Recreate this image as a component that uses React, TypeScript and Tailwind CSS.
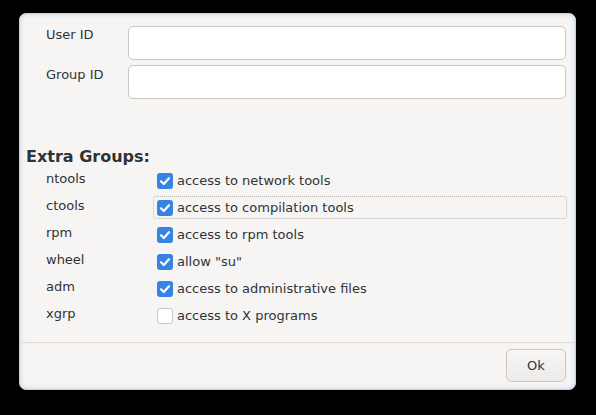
import React from "react";

const groups = [
  { name: "ntools", desc: "access to network tools", checked: true },
  { name: "ctools", desc: "access to compilation tools", checked: true, focus: true },
  { name: "rpm", desc: "access to rpm tools", checked: true },
  { name: "wheel", desc: 'allow "su"', checked: true },
  { name: "adm", desc: "access to administrative files", checked: true },
  { name: "xgrp", desc: "access to X programs", checked: false },
];

function Check({ checked }: { checked: boolean }) {
  if (!checked) {
    return <div className="w-[16px] h-[16px] rounded-[3px] border border-[#cdc7c2] bg-white shrink-0" />;
  }
  return (
    <div className="w-[16px] h-[16px] rounded-[3px] bg-[#3584e4] shrink-0 flex items-center justify-center">
      <svg width="16" height="16" viewBox="0 0 16 16">
        <path d="M4 8.3 L6.8 11 L12 5.2" fill="none" stroke="white" strokeWidth="2.2" strokeLinecap="round" strokeLinejoin="round" />
      </svg>
    </div>
  );
}

export default function App() {
  return (
    <div
      className="w-[596px] h-[415px] bg-black pt-[13px] pl-[19px] text-[13px] leading-[15px] text-[#2e3436]"
      style={{ fontFamily: '"DejaVu Sans", Verdana, sans-serif' }}
    >
      <div className="w-[557px] h-[377px] bg-[#f6f5f4] rounded-[7px] border border-[#c8d0da] shadow-[inset_0_0_5px_rgba(195,212,235,1)] flex flex-col">
        <div className="pt-[12px] flex flex-col gap-[5px]">
          <div className="flex items-start h-[34px]">
            <div className="pl-[26px] w-[108px] pt-[1px]">User ID</div>
            <div className="w-[438px] h-[34px] bg-white border border-[#cdc7c2] rounded-[5px]" />
          </div>
          <div className="flex items-start h-[34px]">
            <div className="pl-[26px] w-[108px] pt-[2px]">Group ID</div>
            <div className="w-[438px] h-[34px] bg-white border border-[#cdc7c2] rounded-[5px]" />
          </div>
        </div>
        <div className="mt-[48px] ml-[6px] text-[16px] leading-[19px] font-bold">Extra Groups:</div>
        <div className="mt-[3px] flex flex-col gap-[4px]">
          {groups.map((g) => (
            <div key={g.name} className="flex h-[23px]">
              <div className="pl-[26px] w-[133px] pt-[2px]">{g.name}</div>
              <div
                className={
                  g.focus
                    ? "w-[414px] h-[23px] flex items-center gap-[4px] px-[3px] border border-dotted border-[#bdb8b3] rounded-[3px]"
                    : "w-[414px] h-[23px] flex items-center gap-[4px] px-[3px] border border-transparent"
                }
              >
                <Check checked={g.checked} />
                <span>{g.desc}</span>
              </div>
            </div>
          ))}
        </div>
        <div className="mt-[15px] h-px bg-[#dedad6]" />
        <div className="pt-[6px] pr-[9px] flex justify-end">
          <button className="w-[60px] h-[33px] rounded-[5px] border border-[#cdc7c2] bg-gradient-to-b from-[#f8f7f6] to-[#edebe9] text-[13px] text-[#2e3436]">
            Ok
          </button>
        </div>
      </div>
    </div>
  );
}
